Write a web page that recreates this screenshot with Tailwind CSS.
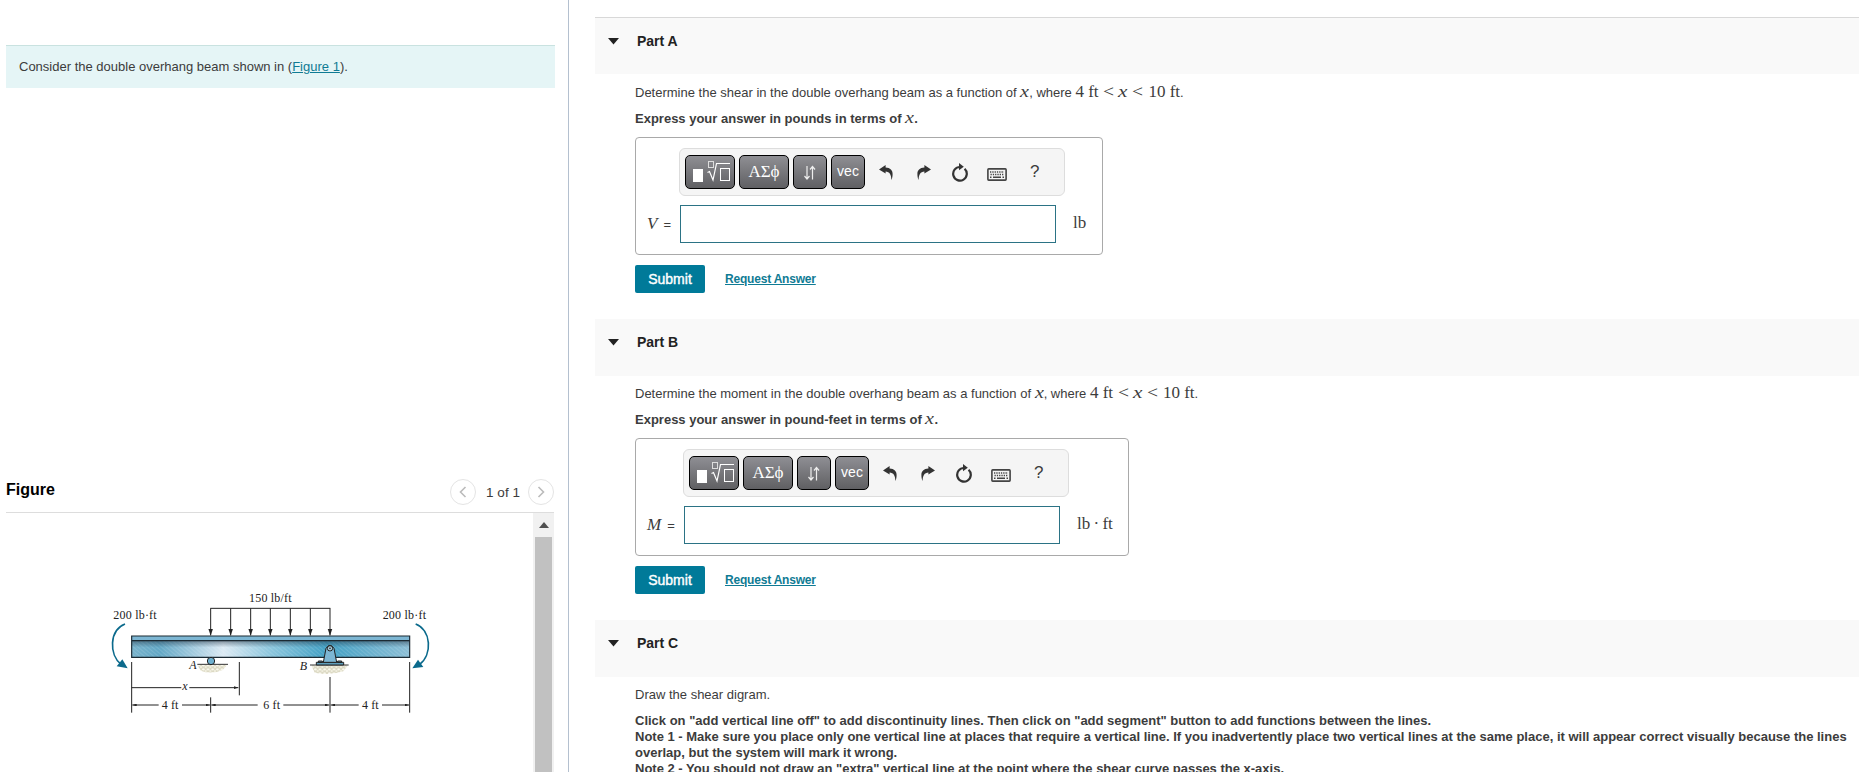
<!DOCTYPE html>
<html lang="en">
  <head>
    <meta charset="UTF-8" />
    <meta name="viewport" content="width=device-width, initial-scale=1.0" />
    <title>Double Overhang Beam</title>
    <script src="https://cdn.jsdelivr.net/npm/@tailwindcss/browser@4"></script>
  </head>
  <body class="bg-white font-['Liberation_Sans',Arial,sans-serif] text-[13px] leading-4 text-[#3c3c3c]">
    <!-- shared icons -->
    <svg class="hidden">
      <symbol id="undo" viewBox="0 0 14 15">
        <path d="M0 4.500 6.600 0v2.400c4.600.2 7.200 2.800 7 6.600 0 2.400-.4 4.400-1.200 6C12.200 9.400 10.600 7 6.600 6.600v2z" fill="#333" />
      </symbol>
      <symbol id="reset" viewBox="0 0 16 19">
        <path d="M12.600 5.800A6.800 6.800 0 1 1 8 4" fill="none" stroke="#333" stroke-width="2.200" />
        <path d="M7 0 11.800 3.800 7 7.200z" fill="#333" />
      </symbol>
      <symbol id="keyboard" viewBox="0 0 20 13">
        <rect x=".9" y=".9" width="18.200" height="11.200" rx=".8" fill="#f5f5f5" stroke="#444" stroke-width="1.600" />
        <path d="M3 4h14M3.500 6.500h13.500" stroke="#444" stroke-width="1.300" stroke-dasharray="1.300 1" />
        <path d="M3 9.200h1.500M6 9.200h8M15.500 9.200h1.500" stroke="#444" stroke-width="1.500" />
      </symbol>
      <symbol id="template" viewBox="0 0 50 34">
        <rect x="8" y="14" width="10" height="13" fill="#fff" />
        <path d="M22.500 17.500l2-1 3.500 8.500L31.500 8.500H45" fill="none" stroke="#fff" stroke-width="1.200" />
        <rect x="23.500" y="6.500" width="5" height="6" fill="none" stroke="#ddd" />
        <rect x="35.500" y="13.500" width="9" height="12" fill="none" stroke="#fff" />
      </symbol>
      <symbol id="updown" viewBox="0 0 34 34">
        <path d="M14 11v13M11.500 21l2.500 3 2.500-3M19.500 24.500V11.500M17 14.500l2.500-3 2.500 3" fill="none" stroke="#eee" stroke-width="1.200" />
      </symbol>
    </svg>

    <div class="flex h-screen overflow-hidden">
      <aside class="flex w-[569px] shrink-0 flex-col border-r border-[#b4c0cf] pl-1.5">
        <div class="mt-[45px] h-[43px] w-[549px] border-t border-[#c9e2e0] bg-[#e5f5f6] pt-[13px] pl-[13px]">
          Consider the double overhang beam shown in (<a href="#" class="text-[#0f7b94] underline">Figure 1</a>).
        </div>

        <div class="mt-[385px] flex h-[40px] w-[548px] items-start justify-between border-b border-[#ddd]">
          <h2 class="pt-[7px] text-base leading-5 font-bold text-black">Figure</h2>
          <div class="flex items-center pt-[6px] text-sm">
            <button class="flex size-[26px] items-center justify-center rounded-full border border-[#e4e4e4]">
              <svg class="size-3" viewBox="0 0 12 12"><path d="M8.500 1 3.500 6l5 5" fill="none" stroke="#bbb" stroke-width="1.600" /></svg>
            </button>
            <span class="w-[52px] pt-[1px] pl-[2px] text-center text-[13.500px]">1 of 1</span>
            <button class="flex size-[26px] items-center justify-center rounded-full border border-[#e4e4e4]">
              <svg class="size-3" viewBox="0 0 12 12"><path d="M3.500 1l5 5-5 5" fill="none" stroke="#bbb" stroke-width="1.600" /></svg>
            </button>
          </div>
        </div>

        <div class="flex w-[548px] grow">
          <div class="grow pt-[67px] pl-[84px]">
            <svg class="h-[150px] w-[360px] font-['Liberation_Serif',serif] text-[36px]" viewBox="0 0 1080 450" fill="#222">
              <defs>
                <linearGradient id="web" x1="0" x2="1" y1="0" y2="0">
                  <stop offset="0" stop-color="#79b3cc" />
                  <stop offset=".1" stop-color="#62a7c5" />
                  <stop offset=".33" stop-color="#dceaf4" />
                  <stop offset=".5" stop-color="#8cc6dd" />
                  <stop offset=".7" stop-color="#42a0c4" />
                  <stop offset="1" stop-color="#8dbfd6" />
                </linearGradient>
                <linearGradient id="shade" x1="0" x2="0" y1="0" y2="1">
                  <stop offset="0" stop-color="#234" stop-opacity=".5" />
                  <stop offset=".4" stop-color="#234" stop-opacity="0" />
                </linearGradient>
                <pattern id="hatch" width="9" height="9" patternUnits="userSpaceOnUse" patternTransform="rotate(-50)">
                  <path d="M0 0V9" stroke="#fff" stroke-opacity=".25" stroke-width="3" />
                </pattern>
                <pattern id="gravel" width="14" height="12" patternUnits="userSpaceOnUse">
                  <rect width="14" height="12" fill="#dcd9c4" />
                  <circle cx="4" cy="4" r="3.500" fill="#fbfaf0" />
                  <circle cx="11" cy="9" r="3" fill="#f5f3e4" />
                </pattern>
                <marker id="tip" markerUnits="userSpaceOnUse" markerWidth="22" markerHeight="16" refX="20" refY="8" orient="auto-start-reverse">
                  <path d="M0 1 21 8 0 15z" fill="#222" />
                </marker>
                <marker id="dim" markerUnits="userSpaceOnUse" markerWidth="13" markerHeight="8" refX="13" refY="4" orient="auto-start-reverse">
                  <path d="M0 0 13 4 0 8z" fill="#222" />
                </marker>
              </defs>

              <!-- beam -->
              <rect x="125" y="168" width="834" height="14" fill="#7db6d3" />
              <rect x="125" y="182" width="834" height="50" fill="url(#web)" />
              <rect x="125" y="182" width="834" height="50" fill="url(#hatch)" />
              <rect x="125" y="182" width="834" height="50" fill="url(#shade)" />
              <path d="M125 168h834v64H125zM125 182h834" fill="none" stroke="#1c2a33" stroke-width="3.500" />

              <!-- supports -->
              <path d="M322 254h90l-14 16q-34 14-66 2z" fill="url(#gravel)" />
              <path d="M322 253h92" stroke="#333" stroke-width="3" />
              <circle cx="363" cy="243" r="11" fill="#6fb0cf" stroke="#222" stroke-width="3" />
              <path d="M664 256h110l-14 18q-42 14-86 4z" fill="url(#gravel)" />
              <path d="M660 255h116" stroke="#333" stroke-width="3" />
              <path d="M679 247h82v8h-82zM685 243h12v4h-12zM743 243h12v4h-12z" fill="#5f9dba" stroke="#222" stroke-width="3" />
              <path d="M700 247l8-42q12-18 24 0l8 42z" fill="#7db6d3" stroke="#222" stroke-width="3" />
              <circle cx="720" cy="205" r="8" fill="#a9cfe0" stroke="#222" stroke-width="3" />
              <circle cx="720" cy="205" r="2.500" />

              <!-- distributed load -->
              <g fill="none" stroke="#222" stroke-width="3">
                <path d="M361 85h360" />
                <path d="M362 85v81" marker-end="url(#tip)" />
                <path d="M422 85v81" marker-end="url(#tip)" />
                <path d="M482 85v81" marker-end="url(#tip)" />
                <path d="M541 85v81" marker-end="url(#tip)" />
                <path d="M601 85v81" marker-end="url(#tip)" />
                <path d="M661 85v81" marker-end="url(#tip)" />
                <path d="M720 85v81" marker-end="url(#tip)" />
              </g>

              <!-- end moments -->
              <path d="M105 132C58 150 56 224 94 254" fill="none" stroke="#0b6a8c" stroke-width="5" />
              <path d="M113 265 80 259 97 238z" fill="#0b6a8c" />
              <path d="M977 132C1024 150 1028 224 988 254" fill="none" stroke="#0b6a8c" stroke-width="5" />
              <path d="M967 265 1000 261 984 239z" fill="#0b6a8c" />

              <!-- dimensions -->
              <g fill="none" stroke="#222" stroke-width="3">
                <path d="M125 246V398M448 246V346M362 352V398M720 291V398M959 246V398" />
                <path d="M125 323H274" />
                <path d="M298 323H445" marker-end="url(#dim)" />
                <path d="M206 375H127" marker-end="url(#dim)" />
                <path d="M276 375H360" marker-end="url(#dim)" />
                <path d="M503 375H364" marker-end="url(#dim)" />
                <path d="M580 375H718" marker-end="url(#dim)" />
                <path d="M806 375H722" marker-end="url(#dim)" />
                <path d="M876 375H957" marker-end="url(#dim)" />
              </g>
              <text x="477" y="67" textLength="128">150 lb/ft</text>
              <text x="70" y="117" textLength="130">200 lb·ft</text>
              <text x="878" y="117" textLength="130">200 lb·ft</text>
              <text x="298" y="268" class="italic">A</text>
              <text x="629" y="270" class="italic">B</text>
              <text x="277" y="331" class="italic">x</text>
              <text x="215" y="387" textLength="50">4 ft</text>
              <text x="520" y="387" textLength="50">6 ft</text>
              <text x="816" y="387" textLength="50">4 ft</text>
            </svg>
          </div>
          <div class="flex w-[21px] flex-col items-center bg-[#f1f1f1]">
            <div class="flex h-6 items-center"><svg class="h-1.5 w-2.5" viewBox="0 0 10 6"><path d="M0 6 5 0l5 6z" fill="#505050" /></svg></div>
            <div class="w-[17px] grow bg-[#c1c1c1]"></div>
          </div>
        </div>
      </aside>

      <main class="ml-[26px] w-[1264px] shrink-0 pt-[17px]">
        <section class="h-[302px]">
          <header class="flex h-[57px] border-t border-[#d8d8d8] bg-[#f9f9f9] pt-[15px]">
            <svg class="mt-[5px] ml-[13px] h-[7px] w-[11px]" viewBox="0 0 11 7"><path d="M0 0h11L5.500 6.500z" fill="#222" /></svg>
            <h3 class="ml-[18px] text-sm leading-4 font-bold text-[#222]">Part A</h3>
          </header>
          <div class="pl-10">
            <p class="flex h-5 items-baseline pt-[10px] whitespace-pre">Determine the shear in the double overhang beam as a function of <span class="inline-block w-[9px] origin-left scale-x-125 font-['Liberation_Serif',serif] text-base/4 italic">x</span>, where <span class="flex font-['Liberation_Serif',serif] text-[17px]/4"><span class="w-[28px]">4 ft</span><span class="w-[15px] origin-left scale-x-115">&lt;</span><i class="w-[14px] origin-left scale-x-125">x</i><span class="w-[16px] origin-left scale-x-115">&lt;</span>10 ft</span>.</p>
            <p class="mt-[16px] flex h-5 items-baseline font-bold whitespace-pre">Express your answer in pounds in terms of <span class="w-[9px] origin-left scale-x-125 font-['Liberation_Serif',serif] text-base/4 font-normal italic">x</span>.</p>
            <div class="mt-[7px] h-[118px] w-[468px] rounded border border-[#a9a9a9] pt-2.5 pl-[11px]">
              <div class="ml-8 flex h-12 w-[386px] items-center rounded-md border border-[#ddd] bg-[#f5f5f5] pl-[5px]">
                <div class="flex gap-1 text-white">
                  <button class="h-[34px] w-[50px] rounded-[5px] border border-black bg-linear-to-b from-[#8f8f94] to-[#606063]"><svg class="-m-px h-[34px] w-[50px]"><use href="#template" /></svg></button>
                  <button class="h-[34px] w-[50px] rounded-[5px] border border-black bg-linear-to-b from-[#8f8f94] to-[#606063] font-['Liberation_Serif',serif] text-[17px]">ΑΣϕ</button>
                  <button class="h-[34px] w-[34px] rounded-[5px] border border-black bg-linear-to-b from-[#8f8f94] to-[#606063]"><svg class="-m-px size-[34px]"><use href="#updown" /></svg></button>
                  <button class="h-[34px] w-[34px] rounded-[5px] border border-black bg-linear-to-b from-[#8f8f94] to-[#606063] pb-0.5 text-sm">vec</button>
                </div>
                <svg class="ml-[14px] h-[15px] w-[14px]"><use href="#undo" /></svg>
                <svg class="ml-[24px] h-[15px] w-[14px] -scale-x-100"><use href="#undo" /></svg>
                <svg class="ml-[21px] h-[19px] w-4"><use href="#reset" /></svg>
                <svg class="mt-1 ml-[19px] h-[13px] w-5"><use href="#keyboard" /></svg>
                <span class="ml-[23px] text-[17px]">?</span>
              </div>
              <div class="mt-[9px] flex h-[38px] items-center">
                <span class="w-[33px] whitespace-pre"><i class="font-['Liberation_Serif',serif] text-[17px]">V</i><span class="pl-[6px]">=</span></span>
                <input class="h-[38px] w-[376px] border border-[#2b7385] bg-white" />
                <span class="ml-[17px] pb-0.5 font-['Liberation_Serif',serif] text-[17px]">lb</span>
              </div>
            </div>
            <div class="mt-2.5 flex items-center">
              <button class="h-7 w-[70px] rounded-xs bg-[#007a99] text-sm text-white [-webkit-text-stroke:0.4px_white]">Submit</button>
              <a href="#" class="ml-5 text-xs font-bold tracking-[-0.2px] text-[#0f7b94] underline">Request Answer</a>
            </div>
          </div>
        </section>

        <section class="h-[301px]">
          <header class="flex h-[57px] bg-[#f9f9f9] pt-[15px]">
            <svg class="mt-[5px] ml-[13px] h-[7px] w-[11px]" viewBox="0 0 11 7"><path d="M0 0h11L5.500 6.500z" fill="#222" /></svg>
            <h3 class="ml-[18px] text-sm leading-4 font-bold text-[#222]">Part B</h3>
          </header>
          <div class="pl-10">
            <p class="flex h-5 items-baseline pt-[9px] whitespace-pre">Determine the moment in the double overhang beam as a function of <span class="w-[9px] origin-left scale-x-125 font-['Liberation_Serif',serif] text-base/4 italic">x</span>, where <span class="flex font-['Liberation_Serif',serif] text-[17px]/4"><span class="w-[28px]">4 ft</span><span class="w-[15px] origin-left scale-x-115">&lt;</span><i class="w-[14px] origin-left scale-x-125">x</i><span class="w-[16px] origin-left scale-x-115">&lt;</span>10 ft</span>.</p>
            <p class="mt-[15px] flex h-5 items-baseline font-bold whitespace-pre">Express your answer in pound-feet in terms of <span class="w-[9px] origin-left scale-x-125 font-['Liberation_Serif',serif] text-base/4 font-normal italic">x</span>.</p>
            <div class="mt-[7px] h-[118px] w-[494px] rounded border border-[#a9a9a9] pt-2.5 pl-[11px]">
              <div class="ml-9 flex h-12 w-[386px] items-center rounded-md border border-[#ddd] bg-[#f5f5f5] pl-[5px]">
                <div class="flex gap-1 text-white">
                  <button class="h-[34px] w-[50px] rounded-[5px] border border-black bg-linear-to-b from-[#8f8f94] to-[#606063]"><svg class="-m-px h-[34px] w-[50px]"><use href="#template" /></svg></button>
                  <button class="h-[34px] w-[50px] rounded-[5px] border border-black bg-linear-to-b from-[#8f8f94] to-[#606063] font-['Liberation_Serif',serif] text-[17px]">ΑΣϕ</button>
                  <button class="h-[34px] w-[34px] rounded-[5px] border border-black bg-linear-to-b from-[#8f8f94] to-[#606063]"><svg class="-m-px size-[34px]"><use href="#updown" /></svg></button>
                  <button class="h-[34px] w-[34px] rounded-[5px] border border-black bg-linear-to-b from-[#8f8f94] to-[#606063] pb-0.5 text-sm">vec</button>
                </div>
                <svg class="ml-[14px] h-[15px] w-[14px]"><use href="#undo" /></svg>
                <svg class="ml-[24px] h-[15px] w-[14px] -scale-x-100"><use href="#undo" /></svg>
                <svg class="ml-[21px] h-[19px] w-4"><use href="#reset" /></svg>
                <svg class="mt-1 ml-[19px] h-[13px] w-5"><use href="#keyboard" /></svg>
                <span class="ml-[23px] text-[17px]">?</span>
              </div>
              <div class="mt-[9px] flex h-[38px] items-center">
                <span class="w-[37px] whitespace-pre"><i class="font-['Liberation_Serif',serif] text-[17px]">M</i><span class="pl-[6px]">=</span></span>
                <input class="h-[38px] w-[376px] border border-[#2b7385] bg-white" />
                <span class="ml-[17px] pb-0.5 font-['Liberation_Serif',serif] text-[17px] [word-spacing:-1px]">lb · ft</span>
              </div>
            </div>
            <div class="mt-2.5 flex items-center">
              <button class="h-7 w-[70px] rounded-xs bg-[#007a99] text-sm text-white [-webkit-text-stroke:0.4px_white]">Submit</button>
              <a href="#" class="ml-5 text-xs font-bold tracking-[-0.2px] text-[#0f7b94] underline">Request Answer</a>
            </div>
          </div>
        </section>

        <section>
          <header class="flex h-[57px] bg-[#f9f9f9] pt-[15px]">
            <svg class="mt-[5px] ml-[13px] h-[7px] w-[11px]" viewBox="0 0 11 7"><path d="M0 0h11L5.500 6.500z" fill="#222" /></svg>
            <h3 class="ml-[18px] text-sm leading-4 font-bold text-[#222]">Part C</h3>
          </header>
          <div class="pt-[10px] pl-10">
            <p>Draw the shear digram.</p>
            <p class="mt-[10px] font-bold whitespace-nowrap">
              Click on "add vertical line off" to add discontinuity lines. Then click on "add segment" button to add functions between the lines.<br />
              Note 1 - Make sure you place only one vertical line at places that require a vertical line. If you inadvertently place two vertical lines at the same place, it will appear correct visually because the lines<br />
              overlap, but the system will mark it wrong.<br />
              Note 2 - You should not draw an "extra" vertical line at the point where the shear curve passes the x-axis.
            </p>
          </div>
        </section>
      </main>
    </div>
  </body>
</html>
